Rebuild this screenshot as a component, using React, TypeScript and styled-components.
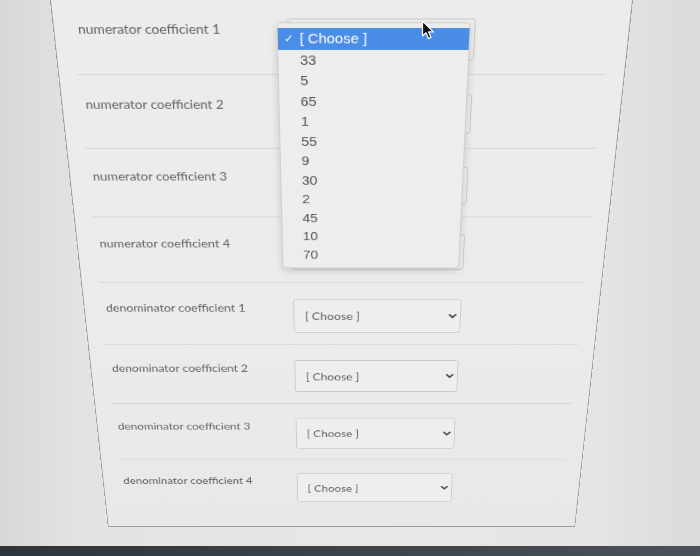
import React from 'react';
import styled, { createGlobalStyle, css } from 'styled-components';

const labels = [
  'numerator coefficient 1',
  'numerator coefficient 2',
  'numerator coefficient 3',
  'numerator coefficient 4',
  'denominator coefficient 1',
  'denominator coefficient 2',
  'denominator coefficient 3',
  'denominator coefficient 4',
];

const options = ['33', '5', '65', '1', '55', '9', '30', '2', '45', '10', '70'];

const GlobalStyle = createGlobalStyle`
  html, body {
    margin: 0;
    padding: 0;
    overflow: hidden;
    background: #e4e4e2;
  }
  body {
    font-family: Lato, 'Noto Sans', sans-serif;
  }
`;

const App = () => (
  <>
    <GlobalStyle />
    <Screen>
      <Stage>
        <Panel>
          {labels.map((label) => (
            <Row key={label}>
              <Label>{label}</Label>
              <SelectBox>
                <span>[ Choose ]</span>
                <Chevron />
              </SelectBox>
            </Row>
          ))}

          <Menu>
            <MenuItem $active>
              <Check>✓</Check>[ Choose ]
            </MenuItem>
            {options.map((o) => (
              <MenuItem key={o}>{o}</MenuItem>
            ))}
          </Menu>
        </Panel>

        <Cursor />
      </Stage>
      <Taskbar />
    </Screen>
  </>
);

export default App;

const Chevron = () => (
  <svg width="9" height="6" viewBox="0 0 9 6">
    <path d="M1 1 L4.5 4.5 L8 1" fill="none" stroke="#4a4a4a" strokeWidth="2" strokeLinecap="round" />
  </svg>
);

const Cursor = () => (
  <CursorIcon width="14" height="21" viewBox="0 0 14 21">
    <path
      d="M1.5 1 L1.5 16 L5 12.8 L7.4 18.6 L10 17.5 L7.6 11.9 L12.4 11.9 Z"
      fill="#111"
      stroke="#fff"
      strokeWidth="1.2"
      strokeLinejoin="round"
    />
  </CursorIcon>
);

const Screen = styled.div`
  width: 700px;
  height: 556px;
  display: flex;
  flex-direction: column;
  overflow: hidden;
  background: linear-gradient(90deg, #d8d8d6 0%, #e3e3e1 12%, #e8e8e6 60%, #e4e5e4 85%, #d9dbdc 100%);
`;

const Stage = styled.div`
  position: relative;
  flex: 1;
  overflow: hidden;
  padding-left: 50px;
`;

const Panel = styled.section`
  position: relative;
  width: 583px;
  box-sizing: border-box;
  padding: 0 19px 22px;
  background: linear-gradient(180deg, #ececea 0%, #ebebe9 60%, #e8e9e7 100%);
  border: 1px solid #9f9f9d;
  border-top: none;
  transform: perspective(564px) rotateX(-12deg);
  transform-origin: 50% 0;
`;

const Row = styled.div`
  display: flex;
  align-items: flex-start;
  padding: 21px 0 15.5px 5px;
  border-bottom: 1px solid #d4d4d2;

  &:first-child {
    padding-top: 18.5px;
  }

  &:nth-child(8) {
    border-bottom: none;
  }
`;

const Label = styled.label`
  flex: none;
  width: 212px;
  margin-top: 1px;
  font-size: 14px;
  line-height: 20px;
  color: #626262;
`;

const SelectBox = styled.div`
  width: 190px;
  height: 44px;
  box-sizing: border-box;
  display: flex;
  align-items: center;
  justify-content: space-between;
  padding: 0 4px 0 12px;
  background: #eeeeec;
  border: 1px solid #cacac8;
  border-radius: 3px;
  font-size: 14px;
  color: #626262;
`;

const Menu = styled.ul`
  position: absolute;
  top: 23px;
  left: 225px;
  width: 194px;
  margin: 0;
  padding: 5px 0;
  list-style: none;
  background: #ededec;
  border: 1px solid #cfcfcd;
  border-radius: 5px;
  box-shadow: 0 3px 8px rgba(0, 0, 0, 0.16);
  font-family: 'Liberation Sans', Arial, sans-serif;
  font-size: 15px;
  color: #555;
`;

const MenuItem = styled.li<{ $active?: boolean }>`
  position: relative;
  height: 22.5px;
  line-height: 22.5px;
  padding-left: 22px;

  ${(p) =>
    p.$active &&
    css`
      background: #4a8de6;
      color: #fff;
    `}
`;

const Check = styled.span`
  position: absolute;
  left: 6px;
  top: 0;
  font-family: 'DejaVu Sans', sans-serif;
  font-size: 12px;
  font-weight: bold;
`;

const CursorIcon = styled.svg`
  position: absolute;
  left: 421px;
  top: 20px;
`;

const Taskbar = styled.div`
  flex: none;
  height: 10px;
  background: linear-gradient(90deg, #2e343b 0%, #3d434b 50%, #4b5158 100%);
`;
